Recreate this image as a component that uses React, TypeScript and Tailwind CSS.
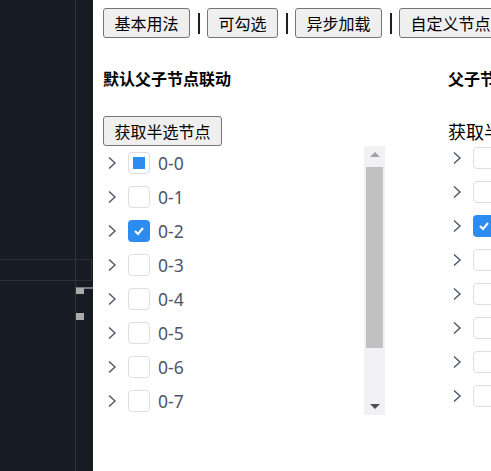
import React from "react";

const FONT = { fontFamily: '"Noto Sans CJK SC", "Noto Sans", sans-serif' };

type Node = { label: string; state: "none" | "half" | "checked" };

const leftNodes: Node[] = [
  { label: "0-0", state: "half" },
  { label: "0-1", state: "none" },
  { label: "0-2", state: "checked" },
  { label: "0-3", state: "none" },
  { label: "0-4", state: "none" },
  { label: "0-5", state: "none" },
  { label: "0-6", state: "none" },
  { label: "0-7", state: "none" },
];

const rightNodes: Node[] = leftNodes.map((n) => ({ ...n, state: n.label === "0-2" ? "checked" : "none" }));

function Chevron() {
  return (
    <svg width="10" height="14" viewBox="0 0 10 14" className="shrink-0">
      <polyline points="2,1.5 8,7 2,12.5" fill="none" stroke="#515a6e" strokeWidth="1.5" />
    </svg>
  );
}

function Checkbox({ state }: { state: Node["state"] }) {
  if (state === "checked") {
    return (
      <span className="w-[22px] h-[22px] rounded-[4px] bg-[#2d8cf0] flex items-center justify-center shrink-0">
        <svg width="12" height="10" viewBox="0 0 12 10">
          <polyline points="2,5 5,8 10,2" fill="none" stroke="#fff" strokeWidth="2" />
        </svg>
      </span>
    );
  }
  return (
    <span className="w-[22px] h-[22px] rounded-[4px] border border-[#dcdee2] bg-white flex items-center justify-center shrink-0">
      {state === "half" && <span className="w-[12px] h-[12px] bg-[#2d8cf0]" />}
    </span>
  );
}

function TreeRows({ nodes }: { nodes: Node[] }) {
  return (
    <div className="flex flex-col">
      {nodes.map((n) => (
        <div key={n.label} className="h-[34px] flex items-center pl-[4px] shrink-0">
          <Chevron />
          <span className="ml-[11px]">
            <Checkbox state={n.state} />
          </span>
          <span className="ml-[8px] text-[17.5px] text-[#4d5569]" style={{ fontFamily: '"Noto Sans", sans-serif' }}>
            {n.label}
          </span>
        </div>
      ))}
    </div>
  );
}

function FakeScrollbar() {
  return (
    <div className="w-[21px] h-full bg-[#f1f0f3] flex flex-col items-center shrink-0">
      <div className="h-[17px] w-full flex items-center justify-center">
        <span className="w-0 h-0 border-l-[5px] border-r-[5px] border-b-[5px] border-l-transparent border-r-transparent border-b-[#a3a3a3]" />
      </div>
      <div className="mt-[4px] h-[181px] w-[17px] bg-[#c1c1c1]" />
      <div className="flex-1" />
      <div className="h-[17px] w-full flex items-center justify-center">
        <span className="w-0 h-0 border-l-[5px] border-r-[5px] border-t-[5px] border-l-transparent border-r-transparent border-t-[#505050]" />
      </div>
    </div>
  );
}

function NavButton({ children }: { children: React.ReactNode }) {
  return (
    <button className="h-[30px] px-[10.5px] text-[16px] leading-[20px] text-black bg-[#efefef] border border-[#767676] rounded-[3px] whitespace-nowrap shrink-0">
      {children}
    </button>
  );
}

function Sep() {
  return <span className="ml-[8px] mr-[7px] w-[2px] h-[21px] bg-[#1d1d2b] shrink-0" />;
}

export default function App() {
  return (
    <div className="flex h-screen w-full overflow-hidden bg-white" style={FONT}>
      {/* dark side panel */}
      <div className="relative w-[93px] shrink-0 bg-[#171b24] overflow-hidden">
        <div className="absolute left-[75px] top-0 bottom-0 w-px bg-[#30343b]" />
        <div className="absolute -left-px top-[259px] w-[93px] h-[22px] border border-[#2e3036]" />
        <div className="absolute left-[76px] top-[287px] w-[17px] h-[2px] bg-[#76787c]" />
        <div className="absolute left-[76px] top-[288px] w-[8px] h-[6px] bg-[#aaaaaa]" />
        <div className="absolute left-[76px] top-[313px] w-[8px] h-[7px] bg-[#aaaaaa]" />
      </div>

      {/* main */}
      <div className="flex-1 min-w-0 overflow-hidden pl-[10px] pt-[8px]">
        <div className="flex items-center">
          <NavButton>基本用法</NavButton>
          <Sep />
          <NavButton>可勾选</NavButton>
          <Sep />
          <NavButton>异步加载</NavButton>
          <Sep />
          <NavButton>自定义节点</NavButton>
        </div>

        <div className="flex mt-[29px]">
          <div className="w-[345px] shrink-0">
            <h3 className="text-[16px] leading-[22px] font-bold text-black">默认父子节点联动</h3>
            <button className="mt-[27px] h-[30px] px-[10.5px] text-[16px] leading-[20px] text-black bg-[#efefef] border border-[#767676] rounded-[3px] whitespace-nowrap">
              获取半选节点
            </button>
            <div className="w-[282px] h-[269px] flex overflow-hidden">
              <div className="flex-1 overflow-hidden">
                <TreeRows nodes={leftNodes} />
              </div>
              <FakeScrollbar />
            </div>
          </div>

          <div className="w-[345px] shrink-0">
            <h3 className="text-[16px] leading-[22px] font-bold text-black whitespace-nowrap">父子节点不联动</h3>
            <div className="mt-[32px] h-[20px] text-[18px] leading-[20px] text-black whitespace-nowrap">获取半选节点</div>
            <div className="w-[282px] h-[300px] overflow-hidden">
              <TreeRows nodes={rightNodes} />
            </div>
          </div>
        </div>
      </div>
    </div>
  );
}
